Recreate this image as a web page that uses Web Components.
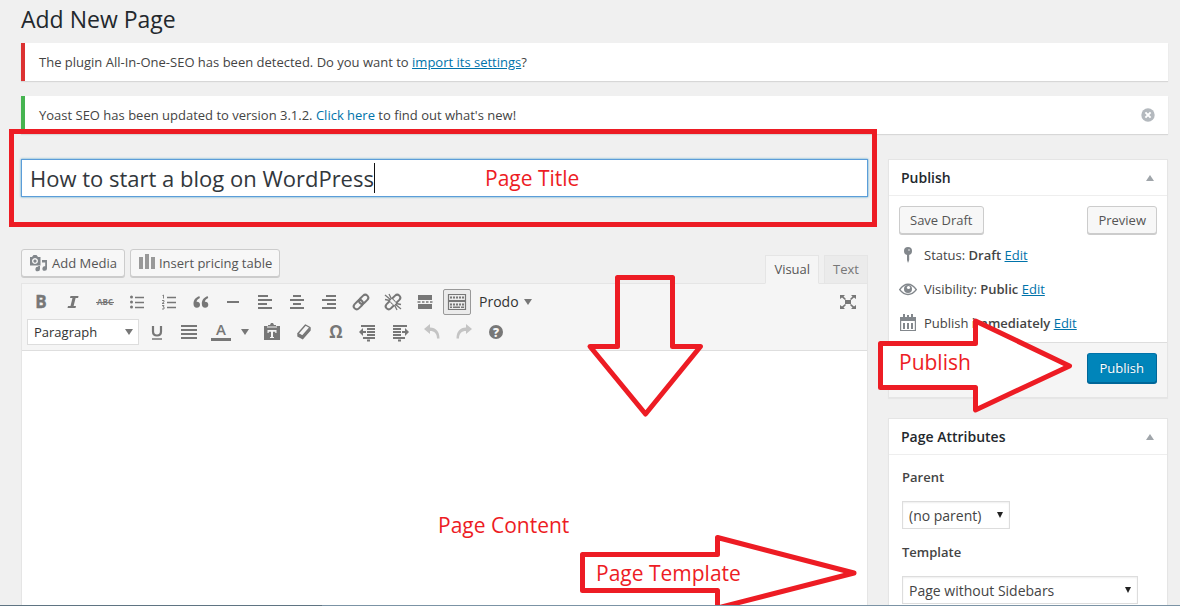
<!DOCTYPE html>
<html lang="en">
<head>
<meta charset="utf-8">
<meta name="viewport" content="width=device-width, initial-scale=1">
<title>Add New Page</title>
<style>
  html, body { height: 100%; }
  body { margin: 0; background: #f0f0f0; color: #444; font: 13px/20px "Open Sans", sans-serif; }
</style>
</head>
<body>
<admin-page></admin-page>

<template id="t-page">
  <style>
    :host { display: flex; flex-direction: column; height: 100vh; overflow: hidden; }
    main { flex: 1; min-height: 0; overflow: hidden; padding: 5px 12px 0 21px; display: flex; flex-direction: column; }
    h1 { margin: 0 0 9px; font-size: 23px; line-height: 29px; font-weight: 400; color: #23282d; }
    a { color: #0073aa; }
    .plain { text-decoration: none; }
    .notices { display: grid; gap: 15px; margin-bottom: 25px; }
    .columns { flex: 1; display: flex; gap: 20px; min-height: 0; }
    .content { flex: 1; min-width: 0; display: flex; flex-direction: column; gap: 52px; }
    page-editor { flex: 1; }
    .side { width: 280px; display: grid; gap: 20px; align-content: start; }
    footer { height: 1px; flex: none; background: linear-gradient(to right, #5f7482 322px, #7b93a5 322px); }
  </style>
  <main>
    <h1>Add New Page</h1>
    <div class="notices">
      <admin-notice kind="error">The plugin All-In-One-SEO has been detected. Do you want to <a href="#import">import its settings</a>?</admin-notice>
      <admin-notice kind="success" dismissible>Yoast SEO has been updated to version 3.1.2. <a class="plain" href="#new">Click here</a> to find out what's new!</admin-notice>
    </div>
    <div class="columns">
      <div class="content">
        <title-field></title-field>
        <page-editor></page-editor>
      </div>
      <div class="side">
        <post-box heading="Publish"><publish-panel></publish-panel></post-box>
        <post-box heading="Page Attributes"><attributes-panel></attributes-panel></post-box>
      </div>
    </div>
  </main>
  <footer></footer>
</template>

<template id="t-notice">
  <style>
    :host { display: flex; align-items: center; justify-content: space-between; background: #fff; border-left: 4px solid #46b450; box-shadow: 0 1px 1px rgba(0,0,0,.1); padding: 9px 12px 9px 14px; }
    :host([kind="error"]) { border-left-color: #dc3232; }
    button { display: none; border: 0; padding: 0; background: none; }
    :host([dismissible]) button { display: block; height: 16px; }
    svg { display: block; }
  </style>
  <span><slot></slot></span>
  <button type="button" aria-label="Dismiss this notice"><svg width="16" height="16" viewBox="0 0 16 16"><circle cx="8" cy="8" r="6.7" fill="#b4b9be"/><path d="M5.4 5.4l5.2 5.2M10.6 5.4l-5.2 5.2" stroke="#fff" stroke-width="2"/></svg></button>
</template>

<template id="t-title">
  <style>
    :host { display: block; position: relative; }
    .box { display: flex; align-items: center; height: 36px; border: 1px solid #5b9dd9; background: #fff; box-shadow: 0 0 2px rgba(30,140,190,.8); padding: 0 8px; }
    input { field-sizing: content; min-width: 0; border: 0; outline: 0; padding: 0; background: none; font: 22px/30px "Open Sans", sans-serif; color: #32373c; }
    .caret { width: 1px; height: 30px; background: #111; }
    .frame { position: absolute; inset: -30px -9px -30px -12px; border: 5px solid #ed1c24; pointer-events: none; }
    red-text { position: absolute; left: 464px; top: 5px; }
  </style>
  <div class="box"><input type="text" aria-label="Page title" value="How to start a blog on WordPress"><span class="caret"></span></div>
  <div class="frame"></div>
  <red-text>Page Title</red-text>
</template>

<template id="t-editor">
  <style>
    :host { display: flex; flex-direction: column; position: relative; min-height: 0; }
    .head { display: flex; justify-content: space-between; height: 34px; }
    .media { display: flex; gap: 5px; align-items: start; }
    .tabs { display: flex; gap: 5px; align-self: end; }
    .tabs button { height: 29px; margin-bottom: -1px; box-sizing: border-box; border: 1px solid #e5e5e5; background: #ebebeb; color: #777; font: inherit; padding: 0 8px 2px; position: relative; }
    .tabs .on { background: #f5f5f5; color: #555; border-bottom-color: #f5f5f5; }
    .frame { flex: 1; display: flex; flex-direction: column; border: 1px solid #e5e5e5; border-bottom: 0; background: #fff; min-height: 300px; }
    .bar { background: #f5f5f5; border-bottom: 1px solid #dedede; padding: 3px 5px; }
    .row { display: flex; align-items: center; gap: 4px; height: 30px; }
    .row .end { margin-left: auto; }
    .split { display: flex; }
    .menu { display: flex; align-items: center; gap: 5px; border: 0; background: none; padding: 0 4px; font: 14px/20px "Open Sans", sans-serif; color: #333; }
    .drop { border: 0; background: none; padding: 0; width: 19px; display: grid; place-items: center; }
    pick-list { width: 112px; }
    textarea { flex: 1; border: 0; outline: 0; resize: none; background: none; }
    .down { position: absolute; left: 565px; top: 24px; }
    .template { position: absolute; left: 557px; top: 284px; }
    .body-note { position: absolute; left: 417px; top: 262px; }
  </style>
  <div class="head">
    <div class="media">
      <push-button icon="media">Add Media</push-button>
      <push-button icon="columns">Insert pricing table</push-button>
    </div>
    <div class="tabs"><button type="button" class="on">Visual</button><button type="button">Text</button></div>
  </div>
  <div class="frame">
    <div class="bar">
      <div class="row">
        <tool-button name="bold"></tool-button><tool-button name="italic"></tool-button><tool-button name="strike"></tool-button><tool-button name="bullets"></tool-button><tool-button name="numbers"></tool-button><tool-button name="quote"></tool-button><tool-button name="rule"></tool-button><tool-button name="left"></tool-button><tool-button name="center"></tool-button><tool-button name="right"></tool-button><tool-button name="link"></tool-button><tool-button name="unlink"></tool-button><tool-button name="more"></tool-button><tool-button name="keyboard" active></tool-button>
        <button type="button" class="menu">Prodo <svg width="8" height="6"><path d="M0 0h8l-4 6z" fill="#777"/></svg></button>
        <tool-button class="end" name="fullscreen"></tool-button>
      </div>
      <div class="row">
        <pick-list compact label="Format" options="Paragraph"></pick-list>
        <tool-button name="underline"></tool-button><tool-button name="justify"></tool-button>
        <span class="split"><tool-button name="color"></tool-button><button type="button" class="drop" aria-label="Text colours"><svg width="8" height="6"><path d="M0 0h8l-4 6z" fill="#777"/></svg></button></span>
        <tool-button name="paste"></tool-button><tool-button name="eraser"></tool-button><tool-button name="omega"></tool-button><tool-button name="outdent"></tool-button><tool-button name="indent"></tool-button><tool-button name="undo" dim></tool-button><tool-button name="redo" dim></tool-button><tool-button name="help"></tool-button>
      </div>
    </div>
    <textarea aria-label="Page content"></textarea>
  </div>
  <note-arrow class="down" w="120" h="146" points="31.5,4.5 86.5,4.5 86.5,73.5 114.5,73.5 59.5,141 4,73.5 31.5,73.5"></note-arrow>
  <red-text class="body-note">Page Content</red-text>
  <note-arrow class="template" w="284" h="80" points="4.5,21.5 139.5,21.5 139.5,4.5 276,40 139.5,75 139.5,57.5 4.5,57.5" style="--label-x:18px;--label-y:26px">Page Template</note-arrow>
</template>

<template id="t-push">
  <style>
    :host { display: inline-block; }
    button { display: flex; align-items: center; height: 28px; box-sizing: border-box; border: 1px solid #ccc; border-radius: 3px; background: #f7f7f7; box-shadow: 0 1px 0 #ccc; color: #555; font: 13px/20px "Open Sans", sans-serif; padding: 0 10px; white-space: nowrap; }
    :host([icon]) button { padding: 0 7px; gap: 3px; }
    :host([primary]) button { height: 30px; padding: 0 12px; background: #0085ba; border-color: #0073aa #006799 #006799; box-shadow: 0 1px 0 #006799; color: #fff; text-shadow: 0 -1px 1px #006799; }
  </style>
  <button type="button"><slot></slot></button>
</template>

<template id="t-tool">
  <style>
    :host { display: block; color: #777; }
    button { display: grid; place-items: center; box-sizing: border-box; width: 28px; height: 26px; border: 1px solid transparent; border-radius: 2px; background: none; color: inherit; padding: 0; }
    :host([active]) button { background: #ebebeb; border-color: #999; }
    :host([dim]) { color: #c4c4c4; }
    svg { display: block; overflow: visible; }
  </style>
  <button type="button"></button>
</template>

<template id="t-pick">
  <style>
    :host { display: grid; gap: 14px; justify-items: start; }
    label { font-weight: 600; line-height: 20px; }
    .wrap { display: grid; align-items: center; justify-items: end; }
    select { grid-area: 1 / 1; appearance: none; box-sizing: border-box; height: 28px; width: 100%; border: 1px solid #ddd; border-radius: 0; background: #fff; box-shadow: inset 0 1px 2px rgba(0,0,0,.07); color: #444; font: 14px/20px "Open Sans", sans-serif; padding: 1px 27px 0 6px; }
    svg { grid-area: 1 / 1; pointer-events: none; margin-right: 6px; }
    :host([wide]) .wrap { width: 236px; }
    :host([compact]) label { display: none; }
    :host([compact]) .wrap { width: 100%; }
    :host([compact]) select { height: 26px; padding-top: 0; font-size: 13px; color: #333; box-shadow: none; }
  </style>
  <label for="s"></label>
  <span class="wrap"><select id="s"></select><svg width="8" height="8"><path d="M1 1h6l-3 6z" fill="#222"/></svg></span>
</template>

<template id="t-box">
  <style>
    :host { display: block; border: 1px solid #e5e5e5; background: #fff; box-shadow: 0 1px 1px rgba(0,0,0,.04); }
    header { display: flex; align-items: center; justify-content: space-between; height: 35px; border-bottom: 1px solid #eee; padding: 0 13px 0 12px; }
    h2 { margin: 0; font-size: 14px; line-height: 20px; font-weight: 600; color: #23282d; }
    button { border: 0; background: none; padding: 0; display: block; }
    svg { display: block; }
  </style>
  <header><h2></h2><button type="button" aria-label="Toggle panel"><svg width="8" height="6"><path d="M4 0l4 6H0z" fill="#a0a5aa"/></svg></button></header>
  <slot></slot>
</template>

<template id="t-publish">
  <style>
    :host { display: block; position: relative; }
    .top { display: flex; justify-content: space-between; padding: 10px; }
    ul { list-style: none; margin: 0; padding: 1px 10px 9px; display: grid; gap: 14px; }
    li { display: flex; align-items: center; gap: 7px; height: 20px; }
    li svg { flex: none; }
    a { color: #0073aa; }
    b { font-weight: 600; }
    .foot { display: flex; justify-content: flex-end; border-top: 1px solid #ddd; background: #f5f5f5; padding: 10px 10px 14px; }
    note-arrow { position: absolute; left: -13px; top: 120px; }
  </style>
  <div class="top"><push-button>Save Draft</push-button><push-button>Preview</push-button></div>
  <ul>
    <li><svg width="18" height="18" viewBox="0 0 18 18" fill="#82878c"><circle cx="9" cy="5" r="4"/><path d="M8 8h2.2v6L9 17 8 14z"/><circle cx="10" cy="4" r="1" fill="#c5c8cb"/></svg><span>Status: <b>Draft</b> <a href="#status">Edit</a></span></li>
    <li><svg width="18" height="18" viewBox="0 0 18 18"><path d="M.7 9.6Q4.500 4.200 9 4.200T17.300 9.600Q13.500 14.500 9 14.500T.7 9.600z" fill="none" stroke="#82878c" stroke-width="1.500"/><circle cx="9" cy="9" r="4" fill="#82878c"/><circle cx="9.500" cy="7.500" r="1.600" fill="#fff"/></svg><span>Visibility: <b>Public</b> <a href="#visibility">Edit</a></span></li>
    <li><svg width="18" height="18" viewBox="0 0 18 18" fill="#82878c"><path d="M1 3h16v14H1zM2.200 7v9h13.600V7z" fill-rule="evenodd"/><path d="M4 0h2v4H4zM12 0h2v4h-2zM8 1h2v3H8zM4 9h2v6H4zM8 9h2v6H8zM12 9h2v6h-2z"/></svg><span>Publish <b>immediately</b> <a href="#date">Edit</a></span></li>
  </ul>
  <div class="foot"><push-button primary>Publish</push-button></div>
  <note-arrow solid w="200" h="100" points="4.500,27.500 99.500,27.500 99.500,5 193.500,50 99.500,94 99.500,71.500 4.500,71.500" style="--label-x:23px;--label-y:32px">Publish</note-arrow>
</template>

<template id="t-attributes">
  <style>
    :host { display: grid; gap: 13px; padding: 12px 12px 30px 13px; }
  </style>
  <pick-list label="Parent" options="(no parent)"></pick-list>
  <pick-list wide label="Template" options="Page without Sidebars|Default Template"></pick-list>
</template>

<template id="t-red">
  <style>
    :host { display: block; color: #ed1c24; font: 21px/28px "Open Sans", sans-serif; white-space: nowrap; pointer-events: none; }
  </style>
  <slot></slot>
</template>

<template id="t-arrow">
  <style>
    :host { display: block; pointer-events: none; }
    svg { display: block; }
    polygon { fill: none; stroke: #ed1c24; stroke-width: 5; stroke-linejoin: round; }
    :host([solid]) polygon { fill: #fff; }
    red-text { position: absolute; left: var(--label-x, 0); top: var(--label-y, 0); }
  </style>
  <svg><polygon/></svg>
  <red-text><slot></slot></red-text>
</template>

<script>
const lines = (list) => `<path stroke="currentColor" stroke-width="2" fill="none" d="${list}"/>`;
const text = (x, y, size, extra, str) => `<text x="${x}" y="${y}" font-size="${size}" text-anchor="middle" fill="currentColor" ${extra}>${str}</text>`;
const SANS = `font-family="Open Sans, sans-serif"`;
const LINK = `<g transform="rotate(-45 10 10)" fill="none" stroke="currentColor" stroke-width="2"><rect x="1" y="7" width="10.500" height="6" rx="3"/><rect x="8.500" y="7" width="10.500" height="6" rx="3"/></g>`;

const ICONS = {
  bold: ["Bold", text(10, 16, 17, `font-weight="700" stroke="currentColor" stroke-width=".4" ${SANS}`, "B")],
  italic: ["Italic", `<path fill="currentColor" d="M7.500 4h8l-.4 2h-2.500l-2 8h2.400l-.5 2H4.500l.5-2h2.500l2-8H7z"/>`],
  strike: ["Strikethrough", text(10, 13, 8, `font-weight="700" ${SANS}`, "ABC") + `<path d="M1 10.500h18" stroke="currentColor"/>`],
  bullets: ["Bulleted list", `<g fill="currentColor"><circle cx="4.500" cy="5" r="1.500"/><circle cx="4.500" cy="10" r="1.500"/><circle cx="4.500" cy="15" r="1.500"/></g><path stroke="currentColor" stroke-width="1.300" d="M8 5.500h9M8 10.500h9M8 15.500h9"/>`],
  numbers: ["Numbered list", `<path fill="none" stroke="currentColor" stroke-width=".9" d="M3.500 3.500l1-.5v3.500M3 8.500h2v1.500l-2 1.500h2.300M3 13.500h2l-1 1.300h1V17H3"/><path stroke="currentColor" stroke-width="1.300" d="M8 5.500h9M8 10.500h9M8 15.500h9"/>`],
  quote: ["Blockquote", `<path fill="currentColor" d="M8.500 4.300C5 5 2.500 7.800 2.500 11.800c0 2.400 1.300 4 3.300 4 1.900 0 3.200-1.300 3.200-3.100 0-1.800-1.200-3-3-3h-.5c.4-1.700 1.600-3 3.400-3.800zM16.800 4.300c-3.500.7-6 3.500-6 7.500 0 2.400 1.300 4 3.300 4 1.900 0 3.200-1.300 3.200-3.100 0-1.800-1.200-3-3-3h-.5c.4-1.700 1.600-3 3.400-3.800z"/>`],
  rule: ["Horizontal line", lines("M4 10h12")],
  left: ["Align left", lines("M3 4h10M3 8h14M3 12h9M3 16h14")],
  center: ["Align centre", lines("M6 4h8M3 8h14M6 12h8M3 16h14")],
  right: ["Align right", lines("M7 4h10M3 8h14M8 12h9M3 16h14")],
  justify: ["Justify", lines("M2 4h16M2 8h16M2 12h16M2 16h16")],
  link: ["Insert link", LINK],
  unlink: ["Remove link", LINK + `<path stroke="#f5f5f5" stroke-width="3" d="M5 5l10 10"/><path stroke="currentColor" stroke-width="1.300" d="M2 3l6 5M6 2l2.500 5M2 7.500l5 1M18 17l-6-5M14 18l-2.500-5M18 12.500l-5-1"/>`],
  more: ["Read more", `<path fill="currentColor" d="M3 3h14v5H3zM3 12h14v5H3zM2.500 9.300h3v1.500h-3zM7 9.300h2.500v1.500H7zM11 9.300h2.500v1.500H11zM15 9.300h2.500v1.500H15z"/>`],
  keyboard: ["Toggle toolbar", `<g fill="none" stroke="currentColor"><path d="M1.500 2.500h17v6h-17zM1.500 9.500h17v8h-17z" stroke-width="1.200"/><path stroke-dasharray="2 1" stroke-width="2" d="M3 5.500h14M3 12.500h14"/><path stroke-width="1.500" d="M3 15.200h2M6 15.200h7M14 15.200h3"/></g>`],
  fullscreen: ["Full screen", `<path fill="currentColor" d="M7 8h6v4H7zM2 3h5L5.500 4.500 8 7 7 8 4 5.500 2 7zM18 3h-5l1.500 1.500L12 7l1 1 3-2.500L18 7zM2 17h5l-1.500-1.500L8 13l-1-1-3 2.500L2 13zM18 17h-5l1.500-1.500L12 13l1-1 3 2.500 2-1.500z"/>`],
  underline: ["Underline", `<path fill="none" stroke="currentColor" stroke-width="2.200" d="M6 4v5.500q0 4 4 4t4-4V4"/><path stroke="currentColor" stroke-width="1.500" d="M5 17h10"/>`],
  color: ["Text colour", text(10, 13, 15, `font-weight="600" ${SANS}`, "A") + `<path d="M0 16h20v3H0z" fill="currentColor"/>`],
  paste: ["Paste as text", `<path fill="currentColor" d="M2 4h4V3h2l1-2h2l1 2h2v1h4v14H2z"/><path fill="#f5f5f5" d="M5 4.500h10v1H5zM5.500 8h9v3h-1.200V9.800h-2.300V15h1v1H8v-1h1V9.800H6.700V11H5.500z"/>`],
  eraser: ["Clear formatting", `<path fill="none" stroke="currentColor" stroke-width="1.400" stroke-linejoin="round" d="M4 11.500L11.500 3l4.500 2.500-7.500 8.500z"/><path fill="currentColor" d="M3.300 11.300l5.200 2.700L16.700 5.500V8.500L8.800 17.500l-5.500-3z"/>`],
  omega: ["Special character", text(10, 16, 17, `font-weight="700" ${SANS}`, "Ω")],
  outdent: ["Decrease indent", `<path stroke="currentColor" stroke-width="2" d="M3 4h14M9 7h8M9 10h8M9 13h8M5 16h12M9 18.500h3"/><path fill="currentColor" d="M1 10L5 6v3h3v2H5v3z"/>`],
  indent: ["Increase indent", `<path stroke="currentColor" stroke-width="2" d="M3 4h14M3 7h8M3 10h8M3 13h8M3 16h12M8 18.500h3"/><path fill="currentColor" d="M19 10l-4-4v3h-3v2h3v3z"/>`],
  undo: ["Undo", `<path fill="currentColor" d="M2 7l6-5v3.500c6 0 9.500 4 9.500 11h-2.500c0-5-2.500-7.500-7-7.500V12z"/>`],
  redo: ["Redo", `<path fill="currentColor" d="M18 7l-6-5v3.500c-6 0-9.500 4-9.500 11H5c0-5 2.500-7.500 7-7.500V12z"/>`],
  help: ["Keyboard shortcuts", `<circle cx="10" cy="10" r="7" fill="currentColor"/><text x="10" y="14.500" font-size="12" text-anchor="middle" font-weight="800" fill="#f5f5f5" ${SANS}>?</text>`],
  media: ["", `<path fill="#82878c" fill-rule="evenodd" d="M1 4h2l1.500-2h3L9 4h2.500v8.500H1zM6 5a3 3 0 1 0 .01 0zM6 6.500a1.600 1.600 0 1 1-.01 0z"/><path fill="#82878c" d="M13 7h5v8.500a2.300 2.300 0 1 1-1.800-2.200V9.500H13zM11 13v3a2.300 2.300 0 1 1-1.800-2.200V13z"/>`],
  columns: ["", `<path fill="#999" d="M1 4h4v12H1zM7 1h4v15H7zM13 4h4v12h-4z"/>`, 18]
};
const svg = (name) => {
  const width = ICONS[name][2] || 20;
  return `<svg width="${width}" height="20" viewBox="0 0 ${width} 20" aria-hidden="true">${ICONS[name][1]}</svg>`;
};

class Base extends HTMLElement {
  constructor() {
    super();
    const source = document.getElementById(this.constructor.source);
    this.attachShadow({ mode: "open" }).append(source.content.cloneNode(true));
  }
  $(selector) { return this.shadowRoot.querySelector(selector); }
}
const define = (tag, source, setup) => customElements.define(tag, class extends Base {
  static source = source;
  connectedCallback() {
    if (this.ready) return;
    this.ready = true;
    if (setup) setup(this);
  }
});

define("red-text", "t-red");
define("note-arrow", "t-arrow", (el) => {
  el.$("svg").setAttribute("width", el.getAttribute("w"));
  el.$("svg").setAttribute("height", el.getAttribute("h"));
  el.$("polygon").setAttribute("points", el.getAttribute("points"));
});
define("push-button", "t-push", (el) => {
  const icon = el.getAttribute("icon");
  if (icon) el.$("button").insertAdjacentHTML("afterbegin", svg(icon));
});
define("tool-button", "t-tool", (el) => {
  const name = el.getAttribute("name");
  el.$("button").innerHTML = svg(name);
  el.$("button").setAttribute("aria-label", ICONS[name][0]);
});
define("pick-list", "t-pick", (el) => {
  el.$("label").textContent = el.getAttribute("label");
  if (el.hasAttribute("compact")) {
    el.$("label").remove();
    el.$("select").setAttribute("aria-label", el.getAttribute("label"));
    el.$("path").setAttribute("fill", "#777");
    el.$("path").setAttribute("d", "M0 1h8l-4 6z");
  }
  for (const name of el.getAttribute("options").split("|")) el.$("select").add(new Option(name));
});
define("post-box", "t-box", (el) => { el.$("h2").textContent = el.getAttribute("heading"); });
define("admin-notice", "t-notice");
define("title-field", "t-title");
define("page-editor", "t-editor");
define("publish-panel", "t-publish");
define("attributes-panel", "t-attributes");
define("admin-page", "t-page");
</script>
</body>
</html>
